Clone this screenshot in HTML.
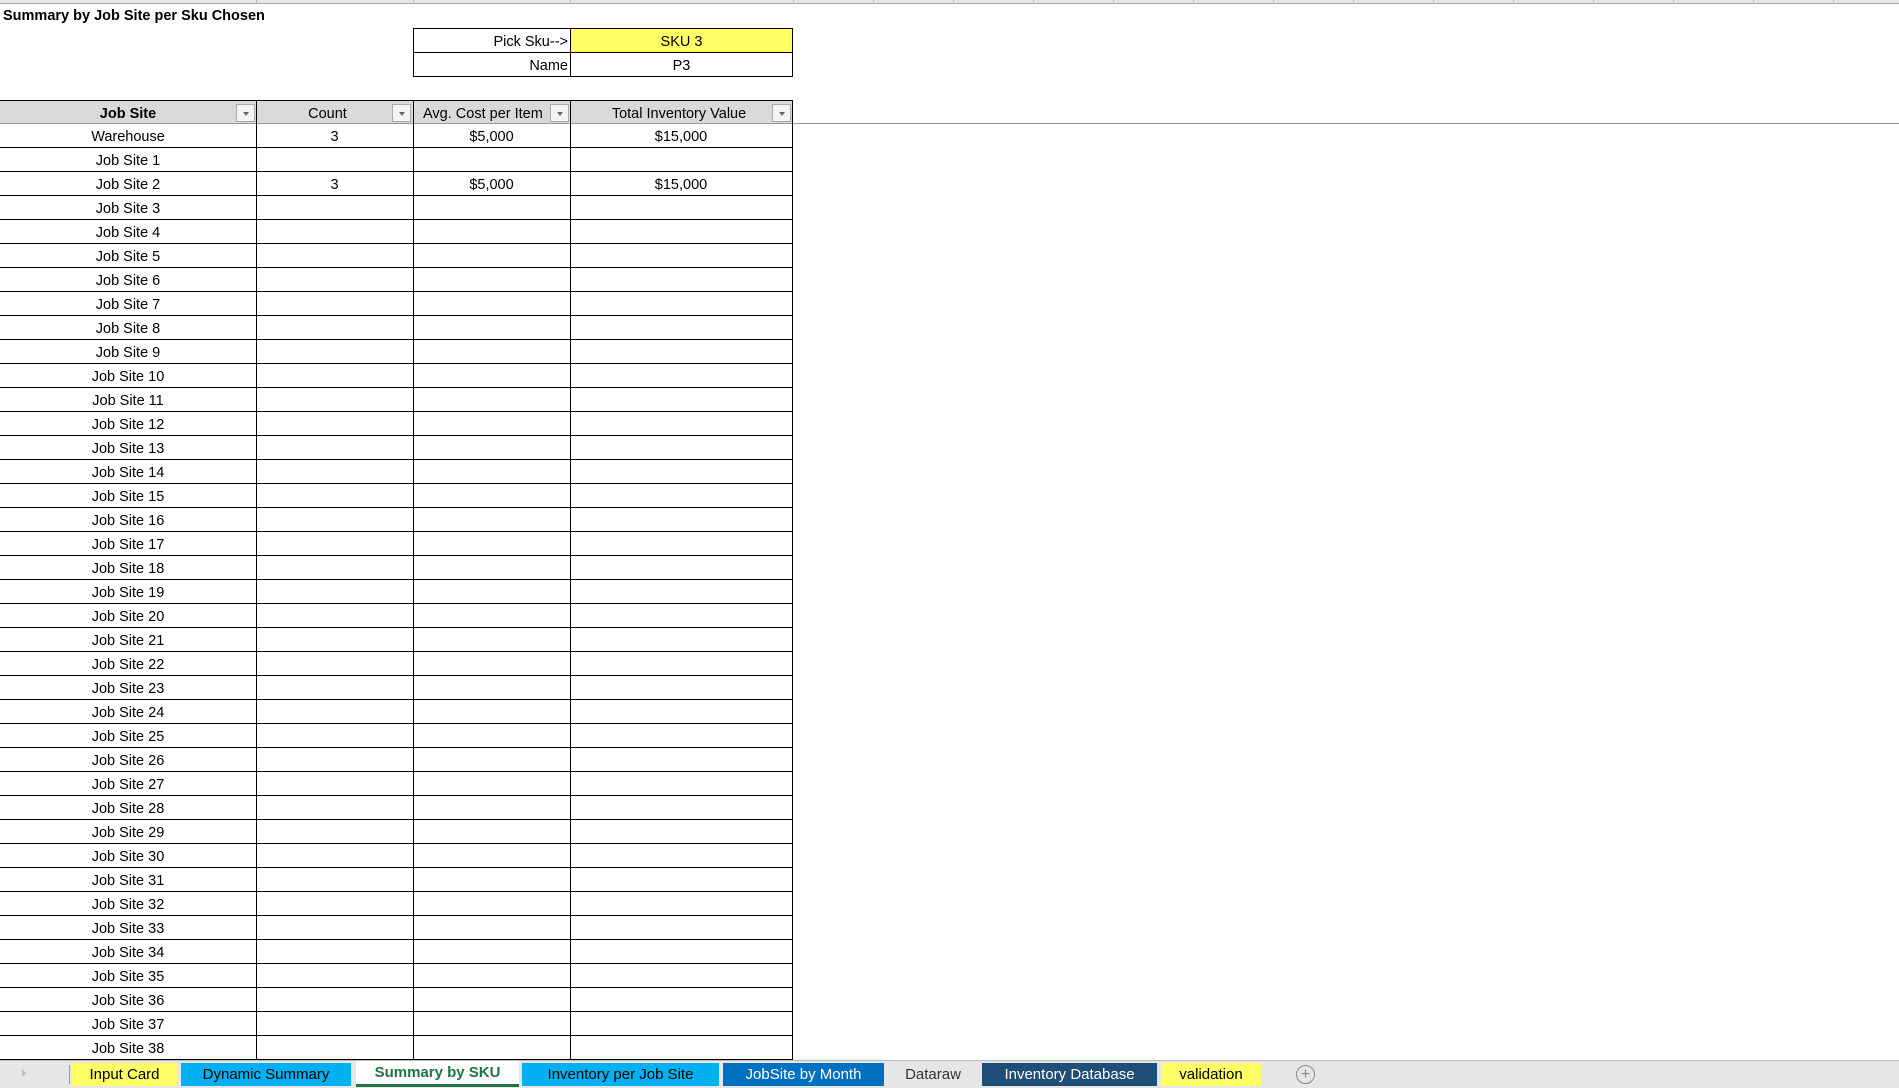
<!DOCTYPE html>
<html><head><meta charset="utf-8"><style>
*{margin:0;padding:0;box-sizing:border-box}
body{width:1899px;height:1088px;overflow:hidden;background:#fff;font-family:"Liberation Sans",sans-serif;font-size:14.5px;color:#000;position:relative}
.a{position:absolute}
.c{position:absolute;display:flex;align-items:center;justify-content:center;white-space:nowrap;overflow:hidden;padding-top:2px}
.dd{position:absolute;width:19px;height:18px;border:1px solid #aaa;background:#f4f4f4;top:104px}
.dd:after{content:"";position:absolute;left:6px;top:7px;border-left:3.5px solid transparent;border-right:3.5px solid transparent;border-top:4px solid #666}
.tab{position:absolute;top:1063px;height:23px;display:flex;align-items:center;justify-content:center;font-size:15px;white-space:nowrap}
</style></head><body>
<div class="a" style="left:0;top:0;width:1899px;height:4px;background:#e6e6e6;border-bottom:1px solid #aaa"></div>
<div id="tops"></div>
<div class="a" style="left:3px;top:8px;font-weight:bold;font-size:14.5px">Summary by Job Site per Sku Chosen</div>
<div class="a" style="left:413px;top:28px;width:380px;height:49px;border:1px solid #000"></div>
<div class="a" style="left:571px;top:29px;width:221px;height:23px;background:#ffff66"></div>
<div class="a" style="left:570px;top:28px;width:1px;height:48px;background:#000"></div>
<div class="a" style="left:413px;top:52px;width:379px;height:1px;background:#000"></div>
<div class="c" style="left:413px;top:29px;width:155px;height:23px;justify-content:flex-end">Pick Sku--&gt;</div>
<div class="c" style="left:571px;top:29px;width:221px;height:23px">SKU 3</div>
<div class="c" style="left:413px;top:53px;width:155px;height:23px;justify-content:flex-end">Name</div>
<div class="c" style="left:571px;top:53px;width:221px;height:23px">P3</div>
<div class="a" style="left:0;top:100px;width:792px;height:24px;background:#d9d9d9;border-top:1px solid #000"></div>
<div class="a" style="left:0;top:123px;width:1899px;height:1px;background:#999"></div>
<div class="c" style="left:0;top:101px;width:256px;height:23px;font-weight:bold">Job Site</div>
<div class="c" style="left:256px;top:101px;width:157px;height:23px;padding-right:14px">Count</div>
<div class="c" style="left:413px;top:101px;width:137px;height:23px;justify-content:flex-start;padding-left:10px">Avg. Cost per Item</div>
<div class="c" style="left:570px;top:101px;width:222px;height:23px;padding-right:4px">Total Inventory Value</div>
<div class="dd" style="left:236px"></div><div class="dd" style="left:392px"></div><div class="dd" style="left:550px"></div><div class="dd" style="left:772px"></div>
<div id="rows"></div>
<div class="a" style="left:256px;top:100px;width:1px;height:960px;background:#000"></div>
<div class="a" style="left:413px;top:100px;width:1px;height:960px;background:#000"></div>
<div class="a" style="left:570px;top:100px;width:1px;height:960px;background:#000"></div>
<div class="a" style="left:792px;top:100px;width:1px;height:960px;background:#000"></div>
<div class="a" style="left:0;top:1060px;width:1899px;height:28px;background:#e6e6e6;border-top:1px solid #bbb"></div>
<div class="a" style="left:22px;top:1069px;border-top:4px solid transparent;border-bottom:4px solid transparent;border-left:4px solid #bbb"></div>
<div class="a" style="left:69px;top:1065px;width:1px;height:19px;background:#999"></div>
<div class="tab" style="left:72px;width:105px;background:#ffff66">Input Card</div>
<div class="tab" style="left:181px;width:170px;background:#00b0f0">Dynamic Summary</div>
<div class="tab" style="left:356px;width:163px;background:#fff;color:#217346;font-weight:bold;border-bottom:3px solid #217346;top:1061px;height:26px">Summary by SKU</div>
<div class="tab" style="left:522px;width:197px;background:#00b0f0">Inventory per Job Site</div>
<div class="tab" style="left:723px;width:161px;background:#0070c0;color:#fff">JobSite by Month</div>
<div class="tab" style="left:888px;width:90px;color:#333">Dataraw</div>
<div class="tab" style="left:982px;width:175px;background:#1f4e78;color:#fff">Inventory Database</div>
<div class="tab" style="left:1161px;width:100px;background:#ffff66">validation</div>
<div class="a" style="left:1296px;top:1065px;width:19px;height:19px;border:1.5px solid #888;border-radius:50%;display:flex;align-items:center;justify-content:center;color:#888;font-size:16px;line-height:1">+</div>
<script>
var names=["Warehouse"];for(var i=1;i<=38;i++)names.push("Job Site "+i);
var h="";names.forEach(function(n,i){var t=124+i*24;
h+='<div class="a" style="left:0;top:'+(t+23)+'px;width:792px;height:1px;background:#000"></div>';
h+='<div class="c" style="left:0;top:'+t+'px;width:256px;height:24px">'+n+'</div>';
if(i==0||i==2){h+='<div class="c" style="left:256px;top:'+t+'px;width:157px;height:24px">3</div><div class="c" style="left:413px;top:'+t+'px;width:157px;height:24px">$5,000</div><div class="c" style="left:570px;top:'+t+'px;width:222px;height:24px">$15,000</div>';}
});document.getElementById("rows").innerHTML=h;
var s="",xs=[256,413,570,793];for(var x=873;x<1899;x+=80)xs.push(x);
xs.forEach(function(x){s+='<div class="a" style="left:'+x+'px;top:0;width:1px;height:4px;background:#bbb"></div>';});
document.getElementById("tops").innerHTML=s;
</script>
</body></html>
